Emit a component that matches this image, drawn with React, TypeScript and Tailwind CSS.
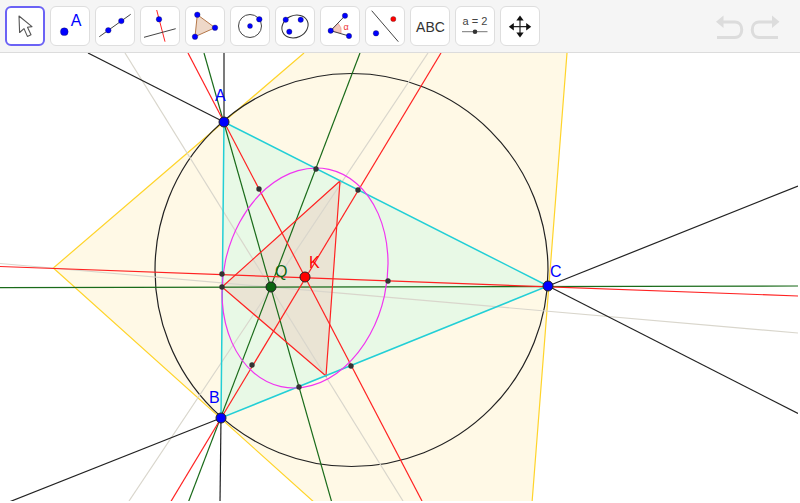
import type { ReactNode } from "react";

const BLUE = "#0000ff";

function Dot({ x, y, r = 3, fill = BLUE }: { x: number; y: number; r?: number; fill?: string }) {
  return <circle cx={x} cy={y} r={r} fill={fill} stroke="#222" strokeOpacity={0.5} strokeWidth={0.6} />;
}

const tools: { x: number; icon: ReactNode }[] = [
  {
    x: 5,
    icon: <path d="M19 16 L19.6 32.5 L24 28.6 L27.4 36.4 L31 34.8 L27.5 27.2 L32 26.6 Z" fill="#fff" stroke="#555" strokeWidth={1.1} strokeLinejoin="round" />,
  },
  {
    x: 50,
    icon: (
      <>
        <Dot x={64.3} y={31.7} r={3.9} />
        <text x={76} y={26} textAnchor="middle" fontSize={16} fill={BLUE}>A</text>
      </>
    ),
  },
  {
    x: 95,
    icon: (
      <>
        <line x1={99.3} y1={36.7} x2={130.7} y2={14.3} stroke="#444" />
        <Dot x={108.3} y={30.3} r={2.8} />
        <Dot x={121.3} y={21} r={2.8} />
      </>
    ),
  },
  {
    x: 140,
    icon: (
      <>
        <line x1={156.7} y1={10} x2={165} y2={41.7} stroke="#f22" />
        <line x1={144} y1={37.3} x2={175.7} y2={28.7} stroke="#444" />
        <Dot x={159} y={19.3} r={2.8} />
      </>
    ),
  },
  {
    x: 185,
    icon: (
      <>
        <polygon points="197.3,14.7 215,27.7 195,36.7" fill="#eed8c8" stroke="#b5784a" />
        <Dot x={197.3} y={14.7} r={2.8} />
        <Dot x={215} y={27.7} r={2.8} />
        <Dot x={195} y={36.7} r={2.8} />
      </>
    ),
  },
  {
    x: 230,
    icon: (
      <>
        <circle cx={250} cy={26} r={11.5} fill="none" stroke="#444" />
        <Dot x={250} y={26} r={2.5} />
        <Dot x={259.3} y={19.3} r={2.8} />
      </>
    ),
  },
  {
    x: 275,
    icon: (
      <>
        <ellipse cx={295} cy={26.5} rx={13.5} ry={11} transform="rotate(-25 295 26.5)" fill="none" stroke="#333" />
        <Dot x={285.7} y={19.7} r={2.7} />
        <Dot x={300.7} y={19.7} r={2.7} />
        <Dot x={289.3} y={31.7} r={2.7} />
      </>
    ),
  },
  {
    x: 320,
    icon: (
      <>
        <path d="M330.7 30.7 L338 23.3 A10.5 10.5 0 0 1 341 33.3 Z" fill="#f3c9bd" stroke="#e88" strokeWidth={0.6} />
        <path d="M345 15.7 L330.7 30.7 L349 36" fill="none" stroke="#444" />
        <Dot x={345} y={15.7} r={2.7} />
        <Dot x={330.7} y={30.7} r={2.7} />
        <Dot x={349} y={36} r={2.7} />
        <text x={346} y={29.5} textAnchor="middle" fontSize={9} fill="#e33">α</text>
      </>
    ),
  },
  {
    x: 365,
    icon: (
      <>
        <line x1={371.7} y1={10.7} x2={398.3} y2={41.7} stroke="#444" />
        <Dot x={376} y={33.3} r={2.8} />
        <Dot x={393.3} y={19} r={2.6} fill="#f00" />
      </>
    ),
  },
  {
    x: 410,
    icon: <text x={430.5} y={31.5} textAnchor="middle" fontSize={14} fill="#333">ABC</text>,
  },
  {
    x: 455,
    icon: (
      <>
        <text x={475} y={25} textAnchor="middle" fontSize={11} fill="#444">a = 2</text>
        <line x1={462} y1={31.7} x2={487.5} y2={31.7} stroke="#777" />
        <circle cx={475} cy={31.7} r={2.3} fill="#333" />
      </>
    ),
  },
  {
    x: 500,
    icon: (
      <>
        <path d="M520 18 V35.5 M511 26.7 H529" stroke="#222" strokeWidth={1.2} />
        <polygon points="520,15.5 516.3,20.5 523.7,20.5" fill="#111" />
        <polygon points="520,37.5 516.3,32.5 523.7,32.5" fill="#111" />
        <polygon points="508.8,26.7 513.8,23 513.8,30.4" fill="#111" />
        <polygon points="531.2,26.7 526.2,23 526.2,30.4" fill="#111" />
      </>
    ),
  },
];

const A = [224, 122];
const B = [221, 418];
const C = [548, 286];
const Q = [271, 287];
const K = [305, 277];

const lines: { p: number[]; color: string }[] = [
  // faint lines first
  { p: [125, 53, 403, 501], color: "#d9d6cc" },
  { p: [428, 53, 129, 501], color: "#d9d6cc" },
  { p: [0, 263.5, 798, 333], color: "#d9d6cc" },
  // side extensions
  { p: [88, 53, 224, 122], color: "#222" },
  { p: [548, 286, 798, 413.5], color: "#222" },
  { p: [9, 502, 221, 418], color: "#222" },
  { p: [548, 286, 798, 186], color: "#222" },
  { p: [224, 53, 224, 122], color: "#222" },
  { p: [221, 418, 220, 503], color: "#222" },
  // through Q
  { p: [204, 53, 332, 503], color: "#1a6b1a" },
  { p: [360, 53, 188, 503], color: "#1a6b1a" },
  { p: [0, 287.7, 798, 286], color: "#1a6b1a" },
  // through K
  { p: [188, 53, 422, 501], color: "#f22" },
  { p: [441, 53, 170, 503], color: "#f22" },
  { p: [0, 266.5, 798, 296], color: "#f22" },
];

const smallPoints = [
  [259, 189],
  [316, 169],
  [358, 190],
  [222, 274],
  [222, 287],
  [388, 281],
  [252, 365],
  [299, 387],
  [351, 366],
];

export default function App() {
  return (
    <div className="w-[800px] h-[503px] overflow-hidden bg-white flex flex-col font-['Liberation_Sans',Arial,sans-serif]">
      <div className="h-[53px] shrink-0 flex items-start justify-between bg-[#f5f5f5] border-b border-[#dcdcdc] pl-[5px] pt-[6px]">
        <div className="flex gap-[5px]">
          {tools.map((t, i) => (
            <button
              key={t.x}
              className={
                i === 0
                  ? "w-10 h-10 rounded-md bg-white border-2 border-[#6b62f5]"
                  : "w-10 h-10 rounded-md bg-white border border-[#dedede]"
              }
            >
              <svg viewBox={`${t.x} 6 40 40`} className={i === 0 ? "w-10 h-10 -m-[2px] block overflow-visible" : "w-10 h-10 -m-px block overflow-visible"}>
                {t.icon}
              </svg>
            </button>
          ))}
        </div>
        <svg width="90" height="46" viewBox="710 6 90 46" fill="none" stroke="#dcdcdc" strokeWidth={3}>
          <path d="M722 22 H735 C744 22 744 37.5 735 37.5 H717" />
          <polygon points="716,21.7 723.5,15.5 723.5,28" fill="#dcdcdc" stroke="none" />
          <path d="M772 22 H759 C750 22 750 37.5 759 37.5 H778" />
          <polygon points="779.5,21.7 772,15.5 772,28" fill="#dcdcdc" stroke="none" />
        </svg>
      </div>
      <svg width="798" height="448" viewBox="0 53 798 448" className="block shrink-0">
        <polygon points="53.3,268 304,53 567,53 532,503 315,503" fill="#fff9e6" stroke="none" />
        <path d="M304 53 L53.3 268 L315 503 M567 53 L532 503" fill="none" stroke="#ffd42a" strokeWidth={1.2} />
        <polygon points={`${A} ${B} ${C}`} fill="#e8f9e6" />
        <polygon points="340,181 222,287 326,376" fill="#eae4d4" />
        <circle cx={351.5} cy={270} r={196.5} fill="none" stroke="#222" strokeWidth={1.2} />
        {lines.map((l, i) => (
          <line key={i} x1={l.p[0]} y1={l.p[1]} x2={l.p[2]} y2={l.p[3]} stroke={l.color} strokeWidth={1.2} />
        ))}
        <polygon points="340,181 222,287 326,376" fill="none" stroke="#f22" strokeWidth={1.2} />
        <polygon points={`${A} ${B} ${C}`} fill="none" stroke="#22cfd6" strokeWidth={1.5} />
        <ellipse cx={305} cy={278} rx={81.4} ry={111.2} transform="rotate(12.45 305 278)" fill="none" stroke="#f035f0" strokeWidth={1.2} />
        {smallPoints.map((p) => (
          <circle key={p.join()} cx={p[0]} cy={p[1]} r={2.7} fill="#333" />
        ))}
        <circle cx={Q[0]} cy={Q[1]} r={5} fill="#0b6410" stroke="#222" />
        <circle cx={K[0]} cy={K[1]} r={5} fill="#ff0000" stroke="#222" />
        <circle cx={A[0]} cy={A[1]} r={5} fill={BLUE} stroke="#222" />
        <circle cx={B[0]} cy={B[1]} r={5} fill={BLUE} stroke="#222" />
        <circle cx={C[0]} cy={C[1]} r={5} fill={BLUE} stroke="#222" />
        <g fontSize={16}>
          <text x={215} y={101} fill={BLUE}>A</text>
          <text x={209} y={403} fill={BLUE}>B</text>
          <text x={550} y={277} fill={BLUE}>C</text>
          <text x={275} y={277} fill="#0b6410">Q</text>
          <text x={309} y={268} fill="#ff0000">K</text>
        </g>
      </svg>
    </div>
  );
}
